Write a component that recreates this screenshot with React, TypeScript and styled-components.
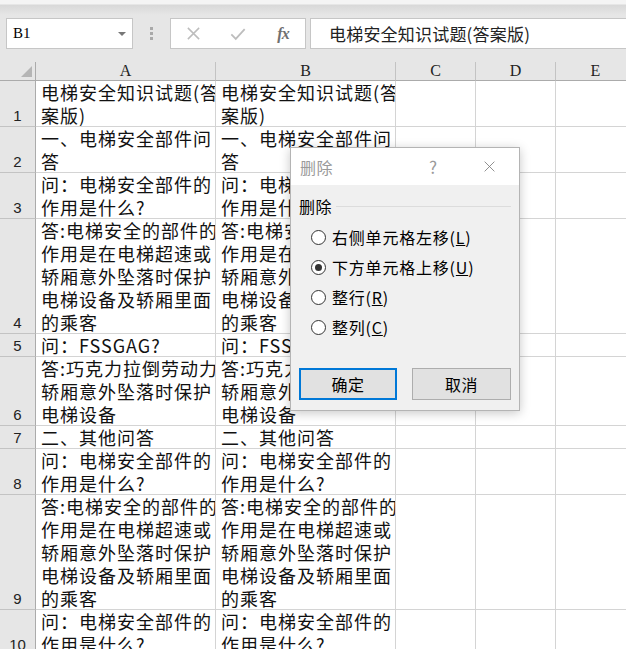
import React from "react";
import styled, { createGlobalStyle } from "styled-components";

const CJK = `"Noto Sans CJK SC", "Noto Sans", sans-serif`;

const GlobalStyle = createGlobalStyle`
  html, body { margin: 0; padding: 0; background: #fff; overflow: hidden; }
  * { box-sizing: border-box; }
`;

const Page = styled.div`
  position: relative;
  width: 626px;
  height: 649px;
  overflow: hidden;
  font-family: ${CJK};
  background: #fff;
`;

/* ---------- formula bar ---------- */
const Toolbar = styled.div`
  height: 62px;
  display: flex;
  align-items: flex-start;
  padding: 18px 0 0 6px;
  background: linear-gradient(#f4f4f4 0px, #f4f4f4 4px, #d8d8d8 5px, #e6e6e6 15px);
`;

const NameBox = styled.div`
  position: relative;
  width: 127px;
  height: 31px;
  flex: none;
  background: #fff;
  border: 1px solid #c6c6c6;
  display: flex;
  align-items: center;
  padding-left: 6px;
  font-family: "Liberation Serif", serif;
  font-size: 15px;
  color: #000;
`;

const DropArrow = styled.span`
  position: absolute;
  right: 6px;
  top: 13px;
  width: 0;
  height: 0;
  border-left: 4px solid transparent;
  border-right: 4px solid transparent;
  border-top: 4px solid #777;
`;

const Grip = styled.div`
  width: 37px;
  height: 31px;
  flex: none;
  display: flex;
  flex-direction: column;
  align-items: center;
  justify-content: center;
  gap: 2px;
`;

const GripDot = styled.span`
  width: 3px;
  height: 3px;
  background: #a9a9a9;
`;

const FnBox = styled.div`
  width: 136px;
  height: 31px;
  flex: none;
  background: #fff;
  border: 1px solid #c6c6c6;
  display: flex;
  align-items: center;
  padding-left: 14px;
  gap: 29px;
`;

const FnIcon = styled.span`
  width: 16px;
  height: 16px;
  display: flex;
  align-items: center;
  justify-content: center;
`;

const FxText = styled.span`
  font-family: "Liberation Serif", serif;
  font-style: italic;
  font-weight: bold;
  font-size: 16px;
  color: #707070;
  letter-spacing: -1px;
`;

const FormulaInput = styled.div`
  flex: 1;
  height: 31px;
  margin-left: 4px;
  background: #fff;
  border: 1px solid #c6c6c6;
  border-right: none;
  display: flex;
  align-items: center;
  padding-left: 18px;
  font-size: 17px;
  letter-spacing: 0.2px;
  color: #222;
`;

/* ---------- sheet ---------- */
const Sheet = styled.div`
  display: grid;
  grid-template-columns: 36px 180px 180px 80px 80px 80px;
  grid-auto-rows: auto;
`;

const Corner = styled.div`
  position: relative;
  height: 19px;
  background: #e6e6e6;
  border-right: 1px solid #ababab;
  border-bottom: 1px solid #ababab;
`;

const CornerTriangle = styled.span`
  position: absolute;
  right: 3px;
  bottom: 3px;
  width: 0;
  height: 0;
  border-left: 11px solid transparent;
  border-bottom: 11px solid #b5b5b5;
`;

const ColHeader = styled.div`
  height: 19px;
  background: #e6e6e6;
  border-right: 1px solid #c3c3c3;
  border-bottom: 1px solid #ababab;
  display: flex;
  align-items: center;
  justify-content: center;
  font-family: "Liberation Serif", serif;
  font-size: 16px;
  color: #222;
`;

const RowHeader = styled.div<{ $lines: number }>`
  height: ${(p) => p.$lines * 23}px;
  background: #e6e6e6;
  border-right: 1px solid #ababab;
  border-bottom: 1px solid #c3c3c3;
  display: flex;
  align-items: flex-end;
  justify-content: center;
  padding-bottom: 2px;
  font-family: "Liberation Sans", sans-serif;
  font-size: 15px;
  color: #222;
`;

const Cell = styled.div<{ $lines: number }>`
  height: ${(p) => p.$lines * 23}px;
  border-right: 1px solid #d4d4d4;
  border-bottom: 1px solid #d4d4d4;
  padding-left: 5px;
  overflow: hidden;
  font-size: 18px;
  line-height: 23px;
  letter-spacing: 1px;
  color: #111;
`;

const Line = styled.div`
  white-space: nowrap;
  height: 23px;
`;

/* ---------- dialog ---------- */
const Dialog = styled.div`
  position: absolute;
  left: 290px;
  top: 147px;
  width: 230px;
  height: 264px;
  background: #f0f0f0;
  border: 1px solid #b4b4b4;
  box-shadow: 0 2px 10px rgba(0, 0, 0, 0.22);
  display: flex;
  flex-direction: column;
`;

const TitleBar = styled.div`
  height: 37px;
  flex: none;
  background: #fff;
  display: flex;
  align-items: center;
  padding-left: 9px;
`;

const TitleText = styled.span`
  flex: 1;
  font-size: 16px;
  letter-spacing: 0.5px;
  color: #9a9a9a;
`;

const TitleButton = styled.span<{ $mr: number }>`
  width: 40px;
  height: 37px;
  margin-right: ${(p) => p.$mr}px;
  display: flex;
  align-items: center;
  justify-content: center;
  font-size: 17px;
  color: #9a9a9a;
`;

const DialogBody = styled.div`
  flex: 1;
  display: flex;
  flex-direction: column;
  padding: 0 8px 10px 8px;
`;

const GroupLabel = styled.div`
  margin-top: 11px;
  height: 20px;
  display: flex;
  align-items: center;
  font-size: 16px;
  letter-spacing: 0.5px;
  color: #000;
`;

const GroupRule = styled.span`
  flex: 1;
  height: 1px;
  margin-left: 4px;
  background: #dcdcdc;
`;

const RadioList = styled.div`
  margin-top: 6px;
  display: flex;
  flex-direction: column;
`;

const RadioRow = styled.div`
  height: 30px;
  display: flex;
  align-items: center;
  padding-left: 12px;
  gap: 6px;
`;

const RadioLabel = styled.span`
  font-size: 16px;
  letter-spacing: 0.8px;
  color: #000;
  white-space: nowrap;
`;

const RadioCircle = styled.span<{ $checked?: boolean }>`
  width: 15px;
  height: 15px;
  flex: none;
  border-radius: 50%;
  border: 1px solid #333;
  background: #fff;
  display: flex;
  align-items: center;
  justify-content: center;
  &::after {
    content: "";
    width: 7px;
    height: 7px;
    border-radius: 50%;
    background: ${(p) => (p.$checked ? "#333" : "transparent")};
  }
`;

const Mnemonic = styled.span`
  text-decoration: underline;
`;

const ButtonRow = styled.div`
  margin-top: auto;
  display: flex;
  justify-content: space-between;
`;

const DlgButton = styled.div<{ $primary?: boolean }>`
  width: ${(p) => (p.$primary ? 98 : 99)}px;
  height: 32px;
  background: #e1e1e1;
  border: ${(p) => (p.$primary ? "2px solid #0078d7" : "1px solid #adadad")};
  display: flex;
  align-items: center;
  justify-content: center;
  font-size: 16px;
  letter-spacing: 0.5px;
  color: #000;
`;

/* ---------- data ---------- */
type Row = { num: string; lines: number; a: string[]; b: string[] };

const q1 = ["问：电梯安全部件的", "作用是什么?"];
const a1 = ["答:电梯安全的部件的", "作用是在电梯超速或", "轿厢意外坠落时保护", "电梯设备及轿厢里面", "的乘客"];
const a2 = ["答:巧克力拉倒劳动力", "轿厢意外坠落时保护", "电梯设备"];

const rows: Row[] = [
  { num: "1", lines: 2, a: ["电梯安全知识试题(答", "案版)"], b: ["电梯安全知识试题(答", "案版)"] },
  { num: "2", lines: 2, a: ["一、电梯安全部件问", "答"], b: ["一、电梯安全部件问", "答"] },
  { num: "3", lines: 2, a: q1, b: q1 },
  { num: "4", lines: 5, a: a1, b: a1 },
  { num: "5", lines: 1, a: ["问：FSSGAG?"], b: ["问：FSSGAG?"] },
  { num: "6", lines: 3, a: a2, b: a2 },
  { num: "7", lines: 1, a: ["二、其他问答"], b: ["二、其他问答"] },
  { num: "8", lines: 2, a: q1, b: q1 },
  { num: "9", lines: 5, a: a1, b: a1 },
  { num: "10", lines: 2, a: q1, b: q1 },
];

const cols = ["A", "B", "C", "D", "E"];

const radios = [
  { label: "右侧单元格左移", key: "L", checked: false },
  { label: "下方单元格上移", key: "U", checked: true },
  { label: "整行", key: "R", checked: false },
  { label: "整列", key: "C", checked: false },
];

const XIcon = ({ size, color, w }: { size: number; color: string; w: number }) => (
  <svg width={size} height={size} viewBox="0 0 16 16">
    <path d="M2 2 L14 14 M14 2 L2 14" stroke={color} strokeWidth={w} fill="none" />
  </svg>
);

const CheckIcon = () => (
  <svg width="18" height="16" viewBox="0 0 18 16">
    <path d="M1.5 8.5 L6.5 13.5 L16.5 2.5" stroke="#bdbdbd" strokeWidth="2" fill="none" />
  </svg>
);

export default function App() {
  return (
    <Page>
      <GlobalStyle />
      <Toolbar>
        <NameBox>
          B1
          <DropArrow />
        </NameBox>
        <Grip>
          <GripDot />
          <GripDot />
          <GripDot />
        </Grip>
        <FnBox>
          <FnIcon>
            <XIcon size={15} color="#bdbdbd" w={1.6} />
          </FnIcon>
          <FnIcon>
            <CheckIcon />
          </FnIcon>
          <FnIcon>
            <FxText>fx</FxText>
          </FnIcon>
        </FnBox>
        <FormulaInput>电梯安全知识试题(答案版)</FormulaInput>
      </Toolbar>

      <Sheet>
        <Corner>
          <CornerTriangle />
        </Corner>
        {cols.map((c) => (
          <ColHeader key={c}>{c}</ColHeader>
        ))}
        {rows.map((r) => (
          <React.Fragment key={r.num}>
            <RowHeader $lines={r.lines}>{r.num}</RowHeader>
            <Cell $lines={r.lines}>
              {r.a.map((t, i) => (
                <Line key={i}>{t}</Line>
              ))}
            </Cell>
            <Cell $lines={r.lines}>
              {r.b.map((t, i) => (
                <Line key={i}>{t}</Line>
              ))}
            </Cell>
            <Cell $lines={r.lines} />
            <Cell $lines={r.lines} />
            <Cell $lines={r.lines} />
          </React.Fragment>
        ))}
      </Sheet>

      <Dialog>
        <TitleBar>
          <TitleText>删除</TitleText>
          <TitleButton $mr={16}>?</TitleButton>
          <TitleButton $mr={10}>
            <XIcon size={13} color="#777" w={1} />
          </TitleButton>
        </TitleBar>
        <DialogBody>
          <GroupLabel>
            删除
            <GroupRule />
          </GroupLabel>
          <RadioList>
            {radios.map((r) => (
              <RadioRow key={r.key}>
                <RadioCircle $checked={r.checked} />
                <RadioLabel>
                  {r.label}(<Mnemonic>{r.key}</Mnemonic>)
                </RadioLabel>
              </RadioRow>
            ))}
          </RadioList>
          <ButtonRow>
            <DlgButton $primary>确定</DlgButton>
            <DlgButton>取消</DlgButton>
          </ButtonRow>
        </DialogBody>
      </Dialog>
    </Page>
  );
}
